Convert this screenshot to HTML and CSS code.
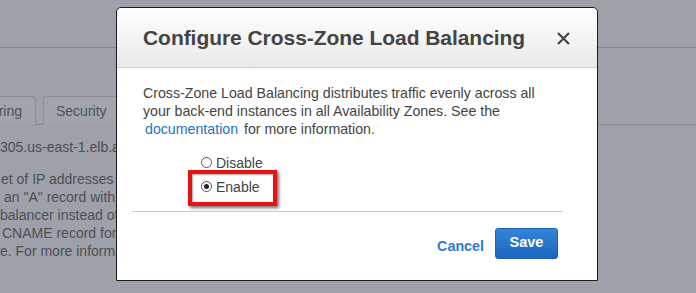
FILE: index.html
```html
<!DOCTYPE html>
<html>
<head>
<meta charset="utf-8">
<link rel="stylesheet" href="styles.css">
</head>
<body>
<div class="page">
  <div class="topbar"></div>
  <div class="tabs">
    <div class="tab tab-first">ring</div>
    <div class="tab tab-sec">Security</div>
  </div>
  <div class="bgtext">
    <div class="l1">305.us-east-1.elb.amazonaws.com</div>
    <div class="l2">et of IP addresses</div>
    <div class="l3">an "A" record with</div>
    <div class="l4">balancer instead of</div>
    <div class="l5">CNAME record for</div>
    <div class="l6">e. For more information</div>
  </div>
</div>

<div class="modal">
  <div class="modal-header">
    <h2 class="modal-title">Configure Cross-Zone Load Balancing</h2>
    <svg class="close" width="13" height="13" viewBox="0 0 13 13"><path d="M1 1 L12 12 M12 1 L1 12" stroke="#444" stroke-width="2.2" fill="none"/></svg>
  </div>
  <div class="modal-body">
    <p class="desc">Cross-Zone Load Balancing distributes traffic evenly across all your back-end instances in all Availability Zones. See the <a class="link">documentation</a> for more information.</p>
    <div class="radios">
      <label class="radio"><span class="circle"></span>Disable</label>
      <label class="radio"><span class="circle checked"></span>Enable</label>
    </div>
  </div>
  <div class="modal-footer">
    <a class="cancel">Cancel</a>
    <button class="save">Save</button>
  </div>
  <div class="highlight"></div>
</div>
</body>
</html>
```
FILE: styles.css
```css
* { box-sizing: border-box; }
html, body { margin: 0; padding: 0; }
body {
  width: 696px;
  height: 293px;
  overflow: hidden;
  background: #9ea1a9;
  font-family: "Liberation Sans", Arial, sans-serif;
  position: relative;
}
.page {
  width: 696px;
  height: 293px;
  overflow: hidden;
}
.topbar {
  height: 48px;
  border-bottom: 1px solid #878a92;
}
.tabs {
  margin-top: 48px;
  height: 29px;
  display: flex;
  gap: 7px;
  border-bottom: 1px solid #878a92;
  margin-left: -20px;
}
.tab {
  height: 29px;
  border: 1px solid #8b8e95;
  border-bottom: none;
  border-radius: 4px 4px 0 0;
  font-size: 14px;
  color: #4f5258;
  line-height: 28px;
  padding: 0 12px;
  background: #a1a4ab;
}
.tab-first { width: 56px; padding-left: 0; text-align: right; padding-right: 13px; }
.tab-sec { width: 120px; }
.bgtext {
  font-size: 14px;
  line-height: 18px;
  color: #4c4f55;
  white-space: nowrap;
  padding-top: 13px;
}
.bgtext .l1 { margin-left: 0; margin-bottom: 14px; }
.bgtext .l2 { margin-left: 1px; }
.bgtext .l3 { margin-left: 4px; }
.bgtext .l4 { margin-left: 0; }
.bgtext .l5 { margin-left: 2px; }
.bgtext .l6 { margin-left: 0; }

.modal {
  position: absolute;
  left: 116px;
  top: 7px;
  width: 482px;
  height: 274px;
  background: #fff;
  border: 1px solid #1b1b1b;
  border-radius: 5px 5px 0 0;
  display: flex;
  flex-direction: column;
}
.modal-header {
  height: 60px;
  border-bottom: 1px solid #cfcfcf;
  border-radius: 5px 5px 0 0;
  background: linear-gradient(#ffffff, #e9e9e9);
  display: flex;
  align-items: center;
  justify-content: space-between;
  padding: 0 27px 0 26px;
}
.modal-title {
  margin: 0;
  font-size: 21px;
  font-weight: bold;
  color: #444;
  letter-spacing: -0.05px;
}
.close {
  display: block;
  margin-top: 1px;
}
.modal-body {
  padding: 16px 26px 0 26px;
}
.desc {
  margin: 0;
  font-size: 14.2px;
  line-height: 18px;
  color: #444;
  width: 400px;
}
.link {
  color: #1e73c8;
  margin: 0 2px 0 2px;
}
.radios {
  margin-top: 15px;
  margin-left: 58px;
  display: flex;
  flex-direction: column;
  gap: 5px;
}
.radio {
  display: flex;
  align-items: center;
  font-size: 14px;
  color: #444;
  height: 19px;
}
.circle {
  width: 11px;
  height: 11px;
  border-radius: 50%;
  border: 1px solid #555;
  background: #fff;
  margin-right: 4px;
  position: relative;
}
.circle.checked::after {
  content: "";
  position: absolute;
  left: 2px;
  top: 2px;
  width: 5px;
  height: 5px;
  border-radius: 50%;
  background: #222;
}
.modal-footer {
  margin: 15px 34px 0 15px;
  border-top: 1px solid #cccccc;
  padding-top: 16px;
  display: flex;
  justify-content: flex-end;
  align-items: center;
  gap: 11px;
  padding-right: 5px;
}
.cancel {
  font-size: 14.3px;
  font-weight: bold;
  color: #2a7bd2;
  margin-top: 5px;
}
.save {
  width: 63px;
  height: 31px;
  border: 1px solid #1b61b4;
  border-radius: 3px;
  background: linear-gradient(#3283da, #1d67bf);
  color: #fff;
  font-family: "Liberation Sans", Arial, sans-serif;
  font-weight: bold;
  font-size: 14.5px;
  padding: 0 0 3px 0;
}
.highlight {
  position: absolute;
  left: 71px;
  top: 162px;
  width: 89px;
  height: 36px;
  border: 4px solid #e8130f;
  box-shadow: 2px 2px 3px rgba(0,0,0,0.55), inset 1px 1px 2px rgba(0,0,0,0.35);
}
```
